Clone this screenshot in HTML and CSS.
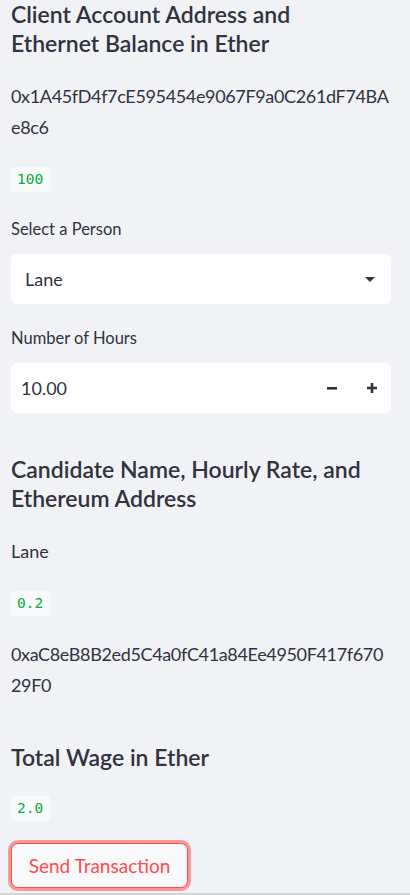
FILE: index.html
```html
<!DOCTYPE html>
<html lang="en">
<head>
    <meta charset="UTF-8">
    <meta name="viewport" content="width=device-width, initial-scale=1.0">
    <title>Payroll Sidebar</title>
    <link rel="stylesheet" href="styles.css">
</head>
<body>

    <div class="sidebar">
        <h3 class="section-title">Client Account Address and Ethernet Balance in Ether</h3>
        <p class="text address">0x1A45fD4f7cE595454e9067F9a0C261dF74BAe8c6</p>
        <p class="code-line"><code>100</code></p>

        <label class="field-label">Select a Person</label>
        <div class="select-box">
            <span>Lane</span>
            <svg class="caret" width="10" height="5" viewBox="0 0 10 5"><path d="M0 0h10L5 5z" fill="#31333f"/></svg>
        </div>

        <label class="field-label">Number of Hours</label>
        <div class="number-box">
            <span>10.00</span>
            <div class="steppers">
                <svg width="10" height="10" viewBox="0 0 10 10"><rect x="0" y="4" width="10" height="2.6" fill="#31333f"/></svg>
                <svg width="10" height="10" viewBox="0 0 10 10"><rect x="0" y="3.7" width="10" height="2.6" fill="#31333f"/><rect x="3.7" y="0" width="2.6" height="10" fill="#31333f"/></svg>
            </div>
        </div>

        <h3 class="section-title">Candidate Name, Hourly Rate, and Ethereum Address</h3>
        <p class="text">Lane</p>
        <p class="code-line"><code>0.2</code></p>
        <p class="text address">0xaC8eB8B2ed5C4a0fC41a84Ee4950F417f67029F0</p>

        <h3 class="section-title">Total Wage in Ether</h3>
        <p class="code-line"><code>2.0</code></p>

        <button class="send-btn">Send Transaction</button>
    </div>

</body>
</html>
```

FILE: styles.css
```css
body {
    margin: 0;
    background-color: #f0f2f6;
    font-family: Lato, "Noto Sans", sans-serif;
    color: #31333f;
}

.sidebar {
    box-sizing: border-box;
    min-height: 895px;
    padding: 0 19px 0 11px;
    border-bottom: 2px solid #d3d4d8;
    overflow: hidden;
}

.section-title {
    margin: 42px 0 0;
    padding-right: 16px;
    font-size: 23px;
    font-weight: 600;
    line-height: 29px;
}

.sidebar > .section-title:first-child {
    margin-top: 0;
}

.text {
    margin: 23px 0 0;
    font-size: 18px;
    line-height: 31px;
}

.address {
    letter-spacing: -0.35px;
    word-break: break-all;
}

.code-line {
    margin: 24px 0 0;
    height: 25px;
}

code {
    display: inline-block;
    vertical-align: top;
    padding: 0 7px 0 6px;
    height: 25px;
    line-height: 25px;
    border-radius: 4px;
    background-color: #f8f9fb;
    color: #09ab3b;
    font-family: "DejaVu Sans Mono", monospace;
    font-size: 14.5px;
}

.field-label {
    display: block;
    margin: 24px 0 15px;
    font-size: 16.5px;
    line-height: 20px;
}

.code-line + .field-label {
    margin-top: 27px;
}

.select-box,
.number-box {
    display: flex;
    align-items: center;
    justify-content: space-between;
    height: 50px;
    background-color: white;
    border-radius: 6px;
    font-size: 18px;
}

.select-box {
    padding: 0 16px 0 14px;
}

.number-box {
    padding: 0 14px 0 10px;
}

.steppers {
    display: flex;
    gap: 30px;
}

.steppers svg,
.caret {
    display: block;
}

.send-btn {
    display: block;
    margin-top: 22px;
    width: 177px;
    height: 45px;
    border: 1px solid #ff4b4b;
    border-radius: 7px;
    background-color: #f9f9fb;
    box-shadow: 0 0 0 3px rgba(255, 75, 75, 0.55);
    color: #ff4b4b;
    font-family: Lato, "Noto Sans", sans-serif;
    font-size: 19px;
    cursor: pointer;
}
```
